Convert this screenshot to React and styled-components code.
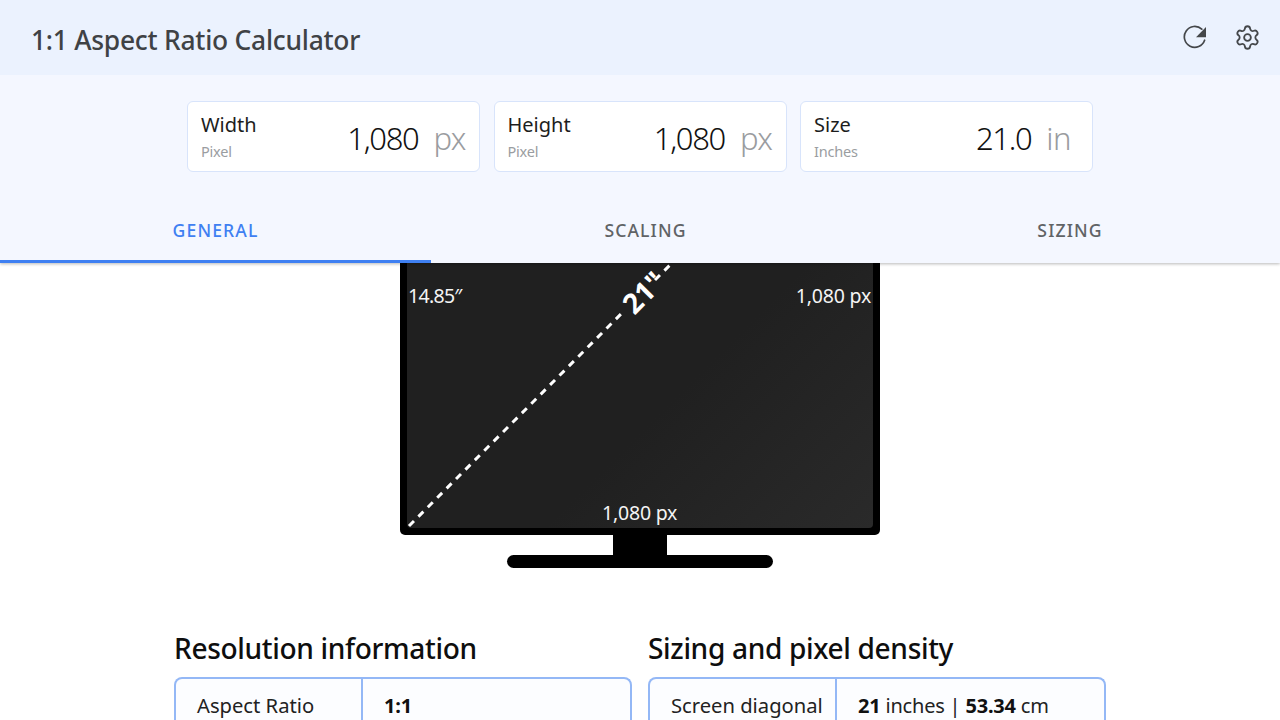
import React from "react";
import styled, { createGlobalStyle } from "styled-components";
import { Settings } from "lucide-react";

const Global = createGlobalStyle`
  html, body { margin: 0; padding: 0; background: #fff; height: 720px; overflow: hidden; }
  body { font-family: "Noto Sans", "Open Sans", sans-serif; }
  * { box-sizing: border-box; }
`;

const Page = styled.div`width: 1280px; height: 720px; overflow: hidden; display: flex; flex-direction: column;`;
const Top = styled.header`
  position: relative; z-index: 2; background: #f4f7ff;
  box-shadow: 0 1px 3px rgba(0,0,0,.28); height: 263px; flex: none;
`;
const TitleBar = styled.div`
  height: 75px; background: #ebf2fe; display: flex; align-items: flex-start; justify-content: space-between;
  padding: 0 19px 0 31px;
`;
const Title = styled.h1`
  margin: 22px 0 0; font-size: 26.4px; line-height: 36px; font-weight: 500; color: #3f4245; letter-spacing: -.25px;
`;
const Actions = styled.div`display: flex; gap: 27px; padding-top: 24px; color: #44474a; align-items: flex-start;`;
const RefreshWrap = styled.div`padding-top: 1px; display: flex;`;
const Cards = styled.div`display: flex; justify-content: center; gap: 13.5px; padding-top: 26px;`;
const Card = styled.div`
  width: 293px; height: 71px; background: #fff; border: 1.5px solid #d8e4fb; border-radius: 6px;
  display: flex; justify-content: space-between; padding: 9px ${p => p.$pad}px 0 13px;
`;
const Labels = styled.div`display: flex; flex-direction: column;`;
const Label = styled.span`font-size: 20px; line-height: 28px; color: #1d1d1d;`;
const Sub = styled.span`font-size: 14.5px; line-height: 20px; margin-top: 2px; color: #9a9da1; letter-spacing: -.2px;`;
const ValueRow = styled.div`display: flex; align-items: baseline; gap: 15px; height: 56px; padding-top: 5px;`;
const Value = styled.span`font-size: 31px; line-height: 44px; color: #111; font-weight: 350; letter-spacing: -1.35px;`;
const Unit = styled.span`font-size: 31px; line-height: 44px; color: #9a9ca0; font-weight: 350; letter-spacing: -.5px;`;
const Tabs = styled.nav`display: grid; grid-template-columns: 431px 429px 420px; height: 91px;`;
const Tab = styled.div`
  display: flex; justify-content: center; align-items: flex-start; padding-top: 46px;
  font-size: 17.6px; line-height: 24px; letter-spacing: 1.1px; font-weight: 500;
  color: ${p => p.$active ? "#3f80f2" : "#606366"};
  border-bottom: 3px solid ${p => p.$active ? "#3f80f2" : "transparent"};
`;
const Stage = styled.section`display: flex; flex-direction: column; align-items: center; flex: none;`;
const Monitor = styled.div`
  position: relative; width: 480px; height: 272px; background: #000; padding: 0 7px 7px 7px;
  border-radius: 0 0 5px 5px;
`;
const Screen = styled.div`
  position: relative; width: 100%; height: 100%; border-radius: 0 0 4px 4px; overflow: hidden;
  background: linear-gradient(135deg, #202020 55%, #2a2a2a 100%);
`;
const DiagSvg = styled.svg`position: absolute; inset: 0; display: block;`;
const Dim = styled.span`
  position: absolute; color: #f4f4f4; font-size: 19.5px; line-height: 26px; letter-spacing: -.2px; white-space: nowrap;
`;
const LeftDim = styled(Dim)`left: 1px; top: 20px; letter-spacing: -.7px;`;
const RightDim = styled(Dim)`right: 2px; top: 20px;`;
const BottomDim = styled(Dim)`left: 195px; top: 237px;`;
const Diag = styled.span`
  position: absolute; left: 220px; top: 17px; color: #fff; font-size: 28px; line-height: 24px; font-weight: 700;
  transform: rotate(-45deg); white-space: nowrap;
`;
const Neck = styled.div`width: 54px; height: 20px; background: #000;`;
const Base = styled.div`width: 266px; height: 13px; background: #000; border-radius: 7px;`;
const Info = styled.div`display: grid; grid-template-columns: 458px 458px; gap: 16px; padding: 61px 0 0 174px;`;
const Heading = styled.h2`
  margin: 0 0 10px; font-size: 28.1px; line-height: 38px; font-weight: 500; color: #0e0e0e; letter-spacing: -.35px;
`;
const Table = styled.div`
  display: grid; grid-template-columns: ${p => p.$first}px 1fr; height: 60px; background: #fcfdff;
  border: 2.5px solid #94b8f6; border-bottom: 0; border-radius: 8px 8px 0 0;
`;
const Key = styled.div`
  padding: 13px 0 0 21px; font-size: 20.2px; line-height: 27px; color: #222; border-right: 2.5px solid #94b8f6;
`;
const Val = styled.div`padding: 13px 0 0 21px; font-size: 20px; line-height: 28px; color: #222; letter-spacing: -.2px; b { font-weight: 700; color: #111; }`;

const Refresh = () => (
  <svg width="24" height="24" viewBox="0 0 24 24" fill="none">
    <path d="M21.6 15.2A10.4 10.4 0 1 1 18.8 4.2" stroke="currentColor" strokeWidth="1.7" strokeLinecap="round" />
    <path d="M23 2v10.2H13z" fill="currentColor" />
  </svg>
);

const FieldCard = ({ label, sub, value, unit, pad }) => (
  <Card $pad={pad}>
    <Labels><Label>{label}</Label><Sub>{sub}</Sub></Labels>
    <ValueRow><Value>{value}</Value><Unit>{unit}</Unit></ValueRow>
  </Card>
);

export default function App() {
  return (
    <Page>
      <Global />
      <Top>
        <TitleBar>
          <Title>1:1 Aspect Ratio Calculator</Title>
          <Actions><RefreshWrap><Refresh /></RefreshWrap><Settings size={27} strokeWidth={1.6} /></Actions>
        </TitleBar>
        <Cards>
          <FieldCard label="Width" sub="Pixel" value="1,080" unit="px" pad={13} />
          <FieldCard label="Height" sub="Pixel" value="1,080" unit="px" pad={13} />
          <FieldCard label="Size" sub="Inches" value="21.0" unit="in" pad={21} />
        </Cards>
        <Tabs>
          <Tab $active>GENERAL</Tab>
          <Tab>SCALING</Tab>
          <Tab>SIZING</Tab>
        </Tabs>
      </Top>
      <Stage>
        <Monitor>
          <Screen>
            <DiagSvg width="466" height="265" viewBox="0 0 466 265">
              <path d="M2 263 L214 51 M248 17 L268 -3" stroke="#fff" strokeWidth="3" strokeDasharray="7 6.3" />
            </DiagSvg>
            <LeftDim>14.85″</LeftDim>
            <RightDim>1,080 px</RightDim>
            <BottomDim>1,080 px</BottomDim>
          </Screen>
          <Diag>21"</Diag>
        </Monitor>
        <Neck />
        <Base />
      </Stage>
      <Info>
        <div>
          <Heading>Resolution information</Heading>
          <Table $first={187}><Key>Aspect Ratio</Key><Val><b>1:1</b></Val></Table>
        </div>
        <div>
          <Heading>Sizing and pixel density</Heading>
          <Table $first={187}><Key>Screen diagonal</Key><Val><b>21</b> inches | <b>53.34</b> cm</Val></Table>
        </div>
      </Info>
    </Page>
  );
}
